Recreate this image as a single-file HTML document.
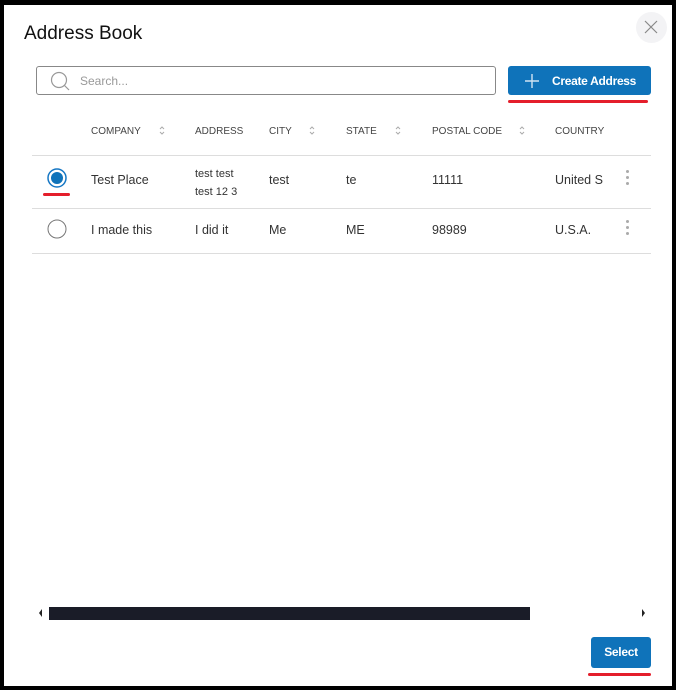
<!DOCTYPE html>
<html><head><meta charset="utf-8"><style>
*{margin:0;padding:0;box-sizing:border-box}
body{width:676px;height:690px;background:#000;position:relative;overflow:hidden;font-family:"Liberation Sans",sans-serif;color:#333}
.p{position:absolute;left:4px;top:5px;width:668px;height:681px;background:#fff}
.a{position:absolute;white-space:nowrap}
.h{font-size:10px;color:#444;top:126px}
.c{font-size:12.5px;color:#333}
.line{position:absolute;left:32px;width:619px;height:1px;background:#ddd}
.red{position:absolute;background:#e41e2b;border-radius:2px;height:3px}
.srt{position:absolute;top:125px;width:6px;height:11px}
.dots{position:absolute;width:3px}
.dots i{display:block;width:3px;height:3px;border-radius:50%;background:#aaa;margin-bottom:3px}
</style></head><body>
<div class="p"></div>
<div class="a" style="left:24px;top:23px;font-size:19px;color:#111">Address Book</div>
<div class="a" style="left:636px;top:12px;width:31px;height:31px;border-radius:50%;background:#f3f3f5"></div>
<svg class="a" style="left:644px;top:20px" width="14" height="14"><path d="M1 1L13 13M13 1L1 13" stroke="#888" stroke-width="1.2"/></svg>
<div class="a" style="left:36px;top:66px;width:460px;height:29px;border:1px solid #888;border-radius:3px"></div>
<svg class="a" style="left:49px;top:70px" width="22" height="22"><circle cx="10" cy="10" r="7.5" fill="none" stroke="#999" stroke-width="1.2"/><path d="M15 15L20 20" stroke="#999" stroke-width="1.2"/></svg>
<div class="a" style="left:80px;top:74px;font-size:12px;color:#999">Search...</div>
<div class="a" style="left:508px;top:66px;width:143px;height:29px;background:#0f73ba;border-radius:3px"></div>
<svg class="a" style="left:524px;top:73px" width="16" height="16"><path d="M8 1V15M1 8H15" stroke="#cfe3f3" stroke-width="1.4"/></svg>
<div class="a" style="left:552px;top:74px;font-size:12px;color:#fff;font-weight:bold;letter-spacing:-0.3px">Create Address</div>
<div class="red" style="left:508px;top:100px;width:140px"></div>
<div class="a h" style="left:91px">COMPANY</div>
<div class="a h" style="left:195px">ADDRESS</div>
<div class="a h" style="left:269px">CITY</div>
<div class="a h" style="left:346px">STATE</div>
<div class="a h" style="left:432px">POSTAL CODE</div>
<div class="a h" style="left:555px">COUNTRY</div>
<svg class="srt" style="left:159px"><path d="M1 4L3 2L5 4M1 7L3 9L5 7" fill="none" stroke="#aaa"/></svg>
<svg class="srt" style="left:309px"><path d="M1 4L3 2L5 4M1 7L3 9L5 7" fill="none" stroke="#aaa"/></svg>
<svg class="srt" style="left:395px"><path d="M1 4L3 2L5 4M1 7L3 9L5 7" fill="none" stroke="#aaa"/></svg>
<svg class="srt" style="left:519px"><path d="M1 4L3 2L5 4M1 7L3 9L5 7" fill="none" stroke="#aaa"/></svg>
<div class="line" style="top:155px"></div>
<div class="line" style="top:208px"></div>
<div class="line" style="top:253px"></div>
<svg class="a" style="left:46px;top:167px" width="22" height="22"><circle cx="11" cy="11" r="9" fill="#fff" stroke="#1677c4" stroke-width="1.5"/><circle cx="11" cy="11" r="6" fill="#0f73ba"/></svg>
<div class="red" style="left:43px;top:193px;width:27px"></div>
<svg class="a" style="left:46px;top:218px" width="22" height="22"><circle cx="11" cy="11" r="9" fill="#fff" stroke="#777" stroke-width="1"/></svg>
<div class="a c" style="left:91px;top:173px">Test Place</div>
<div class="a" style="left:195px;top:165px;font-size:11px;line-height:18px">test test<br>test 12 3</div>
<div class="a c" style="left:269px;top:173px">test</div>
<div class="a c" style="left:346px;top:173px">te</div>
<div class="a c" style="left:432px;top:173px">11111</div>
<div class="a c" style="left:555px;top:173px;width:48px;overflow:hidden">United States</div>
<div class="dots" style="left:626px;top:170px"><i></i><i></i><i></i></div>
<div class="a c" style="left:91px;top:223px">I made this</div>
<div class="a c" style="left:195px;top:223px">I did it</div>
<div class="a c" style="left:269px;top:223px;width:17px;overflow:hidden">Me</div>
<div class="a c" style="left:346px;top:223px">ME</div>
<div class="a c" style="left:432px;top:223px">98989</div>
<div class="a c" style="left:555px;top:223px">U.S.A.</div>
<div class="dots" style="left:626px;top:220px"><i></i><i></i><i></i></div>
<svg class="a" style="left:38px;top:609px" width="6" height="8"><path d="M4 0L1 4L4 8Z" fill="#222"/></svg>
<div class="a" style="left:49px;top:607px;width:481px;height:13px;background:#1a1c28"></div>
<svg class="a" style="left:641px;top:609px" width="6" height="8"><path d="M1 0L4 4L1 8Z" fill="#222"/></svg>
<div class="a" style="left:591px;top:637px;width:60px;height:31px;background:#0f73ba;border-radius:3px;color:#fff;font-weight:bold;font-size:12px;text-align:center;line-height:31px;letter-spacing:-0.3px">Select</div>
<div class="red" style="left:588px;top:673px;width:63px"></div>
</body></html>
